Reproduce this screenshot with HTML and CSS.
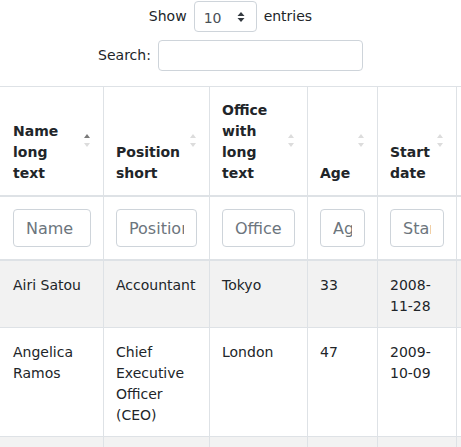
FILE: index.html
```html
<!DOCTYPE html>
<html lang="en">
<head>
    <meta charset="UTF-8">
    <meta name="viewport" content="width=device-width, initial-scale=1.0">
    <title>Employees</title>
    <link rel="stylesheet" href="styles.css">
</head>
<body>
    <div class="dt-wrapper">
        <div class="dt-length">
            <label>Show
                <span class="select-wrap">
                    <select class="page-size">
                        <option>10</option>
                        <option>25</option>
                        <option>50</option>
                        <option>100</option>
                    </select>
                    <svg class="select-arrows" width="8" height="10" viewBox="0 0 8 10"><path d="M4 0L0.5 4h7z M4 10L0.5 6h7z" fill="#343a40"/></svg>
                </span>
                entries</label>
        </div>
        <div class="dt-filter">
            <label>Search:<input type="search" class="search-box"></label>
        </div>
        <div class="table-scroll">
            <table class="data-table">
                <colgroup>
                    <col style="width:104px">
                    <col style="width:106px">
                    <col style="width:98px">
                    <col style="width:70px">
                    <col style="width:79px">
                    <col style="width:110px">
                </colgroup>
                <thead>
                    <tr class="head-row">
                        <th class="sorting sorting-asc">Name long text</th>
                        <th class="sorting">Position short</th>
                        <th class="sorting">Office with long text</th>
                        <th class="sorting">Age</th>
                        <th class="sorting">Start date</th>
                        <th class="sorting"></th>
                    </tr>
                    <tr class="filter-row">
                        <th><input class="col-filter" placeholder="Name"></th>
                        <th><input class="col-filter" placeholder="Position"></th>
                        <th><input class="col-filter" placeholder="Office"></th>
                        <th><input class="col-filter" placeholder="Age"></th>
                        <th><input class="col-filter" placeholder="Start date"></th>
                        <th></th>
                    </tr>
                </thead>
                <tbody>
                    <tr>
                        <td>Airi Satou</td>
                        <td>Accountant</td>
                        <td>Tokyo</td>
                        <td>33</td>
                        <td>2008-11-28</td>
                        <td></td>
                    </tr>
                    <tr>
                        <td>Angelica Ramos</td>
                        <td>Chief Executive Officer (CEO)</td>
                        <td>London</td>
                        <td>47</td>
                        <td>2009-10-09</td>
                        <td></td>
                    </tr>
                    <tr>
                        <td>&nbsp;</td>
                        <td></td>
                        <td></td>
                        <td></td>
                        <td></td>
                        <td></td>
                    </tr>
                </tbody>
            </table>
        </div>
    </div>
</body>
</html>
```

FILE: styles.css
```css
* {
    box-sizing: border-box;
}
body {
    margin: 0;
    font-family: "DejaVu Sans", Verdana, sans-serif;
    font-size: 14px;
    line-height: 1.5;
    color: #212529;
    background-color: #fff;
    overflow: hidden;
}
.dt-wrapper {
    padding-top: 1px;
}
.dt-length,
.dt-filter {
    text-align: center;
    white-space: nowrap;
}
.dt-length label,
.dt-filter label {
    display: inline-flex;
    align-items: center;
    height: 31px;
}
.dt-length {
    margin-bottom: 8px;
}
.dt-filter {
    margin-bottom: 15px;
}
.select-wrap {
    position: relative;
    display: inline-block;
    margin: 0 7px;
}
.page-size {
    -webkit-appearance: none;
    appearance: none;
    width: 63px;
    height: 31px;
    padding: 2px 20px 0 9px;
    font-family: inherit;
    font-size: 14px;
    color: #495057;
    background-color: #fff;
    border: 1px solid #ced4da;
    border-radius: 4px;
    display: block;
}
.select-arrows {
    position: absolute;
    right: 12px;
    top: 11px;
    pointer-events: none;
}
.search-box {
    width: 205px;
    height: 31px;
    margin-left: 7px;
    padding: 4px 8px;
    font-family: inherit;
    font-size: 14px;
    border: 1px solid #ced4da;
    border-radius: 4px;
}
.table-scroll {
    width: 100%;
    overflow: hidden;
}
.data-table {
    table-layout: fixed;
    width: 567px;
    border-collapse: separate;
    border-spacing: 0;
    border-top: 1px solid #dee2e6;
}
.data-table th,
.data-table td {
    padding: 13px 12px 11px;
    border-right: 1px solid #dee2e6;
    border-bottom: 1px solid #dee2e6;
    text-align: left;
    vertical-align: top;
}
.data-table td {
    padding-top: 14px;
    padding-bottom: 10px;
}
.data-table th:first-child,
.data-table td:first-child {
    padding-left: 13px;
}
.data-table thead th {
    vertical-align: bottom;
    border-bottom-width: 2px;
    font-weight: bold;
}
.data-table .filter-row th {
    padding-top: 12px;
    padding-bottom: 12px;
}
.data-table tbody tr:nth-child(odd) {
    background-color: #f2f2f2;
}
.sorting {
    position: relative;
    padding-right: 30px !important;
}
.sorting::before,
.sorting::after {
    content: "";
    position: absolute;
    right: 13px;
    width: 0;
    height: 0;
    border-left: 3px solid transparent;
    border-right: 3px solid transparent;
}
.sorting::before {
    top: calc(50% - 7px);
    border-bottom: 4px solid #dcdcdc;
}
.sorting::after {
    top: calc(50% + 2px);
    border-top: 4px solid #dcdcdc;
}
.sorting-asc::before {
    border-bottom-color: #7a7a7a;
}
.col-filter {
    display: block;
    width: 100%;
    height: 38px;
    padding: 6px 12px;
    font-family: inherit;
    font-size: 16px;
    line-height: 1.5;
    color: #495057;
    background-color: #fff;
    border: 1px solid #ced4da;
    border-radius: 4px;
}
.col-filter::placeholder {
    color: #6c757d;
}
```
